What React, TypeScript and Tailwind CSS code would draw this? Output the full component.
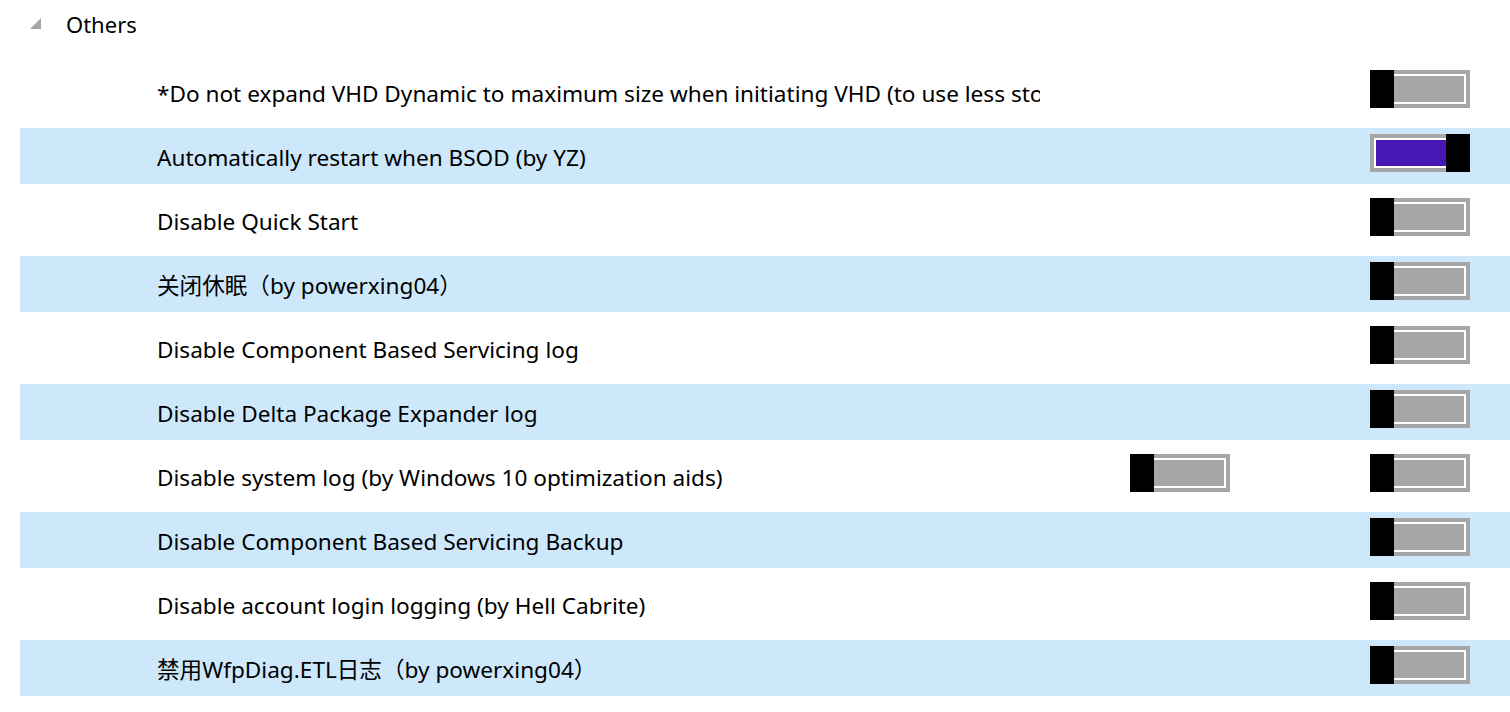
import type { ReactNode } from 'react'

interface Option {
  label: ReactNode
  on?: boolean
  extra?: boolean
}

const options: Option[] = [
  { label: '*Do not expand VHD Dynamic to maximum size when initiating VHD (to use less storage space)' },
  { label: 'Automatically restart when BSOD (by YZ)', on: true },
  { label: 'Disable Quick Start' },
  { label: '关闭休眠（by powerxing04）' },
  { label: 'Disable Component Based Servicing log' },
  { label: 'Disable Delta Package Expander log' },
  { label: 'Disable system log (by Windows 10 optimization aids)', extra: true },
  { label: 'Disable Component Based Servicing Backup' },
  { label: 'Disable account login logging (by Hell Cabrite)' },
  { label: '禁用WfpDiag.ETL日志（by powerxing04）' },
]

function Toggle({ on }: { on?: boolean }) {
  return (
    <div className="relative h-[38px] w-[100px] bg-[#a6a6a6] p-[4px]">
      <div
        className={
          on
            ? 'h-full w-full border-2 border-white bg-[#4617b4]'
            : 'h-full w-full border-2 border-white bg-[#a6a6a6]'
        }
      />
      <div
        className={
          on
            ? 'absolute right-0 top-0 h-[38px] w-[24px] bg-black'
            : 'absolute left-0 top-0 h-[38px] w-[24px] bg-black'
        }
      />
    </div>
  )
}

export default function App() {
  return (
    <div
      className="h-[712px] w-[1510px] overflow-hidden bg-white text-black"
      style={{ fontFamily: '"Noto Sans", "Noto Sans CJK SC", sans-serif' }}
    >
      <div className="flex h-[48px] items-center">
        <svg width="11" height="11" viewBox="0 0 11 11" className="ml-[30px] mb-[2px]">
          <polygon points="11,0 11,11 0,11" fill="#a6a6a6" />
        </svg>
        <span className="ml-[25px] text-[22px]">Others</span>
      </div>

      <div className="mt-[16px] flex flex-col gap-[8px] pl-[20px]">
        {options.map((opt, i) => (
          <div
            key={i}
            className={
              i % 2 === 1
                ? 'flex h-[56px] items-start bg-[#cce8fa]'
                : 'flex h-[56px] items-start'
            }
          >
            <div className="flex h-[56px] w-[1020px] shrink-0 items-center overflow-hidden whitespace-nowrap pl-[137px] text-[22.6px]">
              <span className="pt-[3px]">{opt.label}</span>
            </div>
            <div className="ml-[90px] w-[100px] shrink-0 pt-[6px]">
              {opt.extra && <Toggle />}
            </div>
            <div className="ml-[140px] w-[100px] shrink-0 pt-[6px]">
              <Toggle on={opt.on} />
            </div>
          </div>
        ))}
      </div>
    </div>
  )
}
